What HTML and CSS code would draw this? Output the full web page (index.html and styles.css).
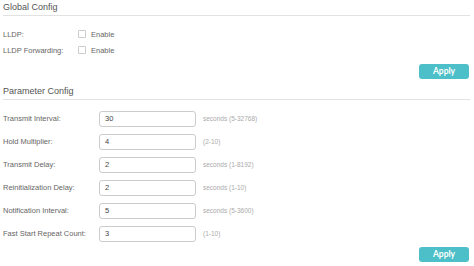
FILE: index.html
```html
<!DOCTYPE html>
<html>
<head>
<meta charset="utf-8">
<link rel="stylesheet" href="styles.css">
</head>
<body>
<div class="page">
  <section class="panel">
    <div class="title">Global Config</div>
    <div class="check-rows">
      <div class="crow"><span class="clabel">LLDP:</span><span class="box"></span><span class="ctext">Enable</span></div>
      <div class="crow"><span class="clabel">LLDP Forwarding:</span><span class="box"></span><span class="ctext">Enable</span></div>
    </div>
    <div class="actions"><button class="apply">Apply</button></div>
  </section>
  <section class="panel">
    <div class="title">Parameter Config</div>
    <div class="form">
      <div class="frow"><span class="flabel">Transmit Interval:</span><span class="input">30</span><span class="hint">seconds (5-32768)</span></div>
      <div class="frow"><span class="flabel">Hold Multiplier:</span><span class="input">4</span><span class="hint">(2-10)</span></div>
      <div class="frow"><span class="flabel">Transmit Delay:</span><span class="input">2</span><span class="hint">seconds (1-8192)</span></div>
      <div class="frow"><span class="flabel">Reinitialization Delay:</span><span class="input">2</span><span class="hint">seconds (1-10)</span></div>
      <div class="frow"><span class="flabel">Notification Interval:</span><span class="input">5</span><span class="hint">seconds (5-3600)</span></div>
      <div class="frow"><span class="flabel">Fast Start Repeat Count:</span><span class="input">3</span><span class="hint">(1-10)</span></div>
    </div>
    <div class="actions second"><button class="apply">Apply</button></div>
  </section>
</div>
</body>
</html>
```
FILE: styles.css
```css
html, body {
  margin: 0;
  padding: 0;
  background: #ffffff;
}
body {
  font-family: "Liberation Sans", Arial, sans-serif;
  color: #666666;
}
.page {
  padding: 0 4px 0 3px;
}
.title {
  height: 15px;
  line-height: 15px;
  font-size: 9px;
  color: #555555;
  border-bottom: 1px solid #e2e2e2;
}
.check-rows {
  margin-top: 10px;
}
.crow {
  display: flex;
  align-items: center;
  height: 16px;
  font-size: 7.5px;
}
.clabel {
  width: 75px;
  flex: none;
}
.box {
  width: 6px;
  height: 6px;
  border: 1px solid #cccccc;
  border-radius: 1px;
  flex: none;
}
.ctext {
  margin-left: 5px;
}
.actions {
  display: flex;
  justify-content: flex-end;
  margin-top: 6px;
  margin-bottom: 5px;
  padding-right: 1px;
}
.second {
  margin-top: 2px;
}
.apply {
  width: 50px;
  height: 15px;
  padding: 0;
  border: none;
  border-radius: 3px;
  background: #4cbfc8;
  color: #ffffff;
  font-family: Lato, "Liberation Sans", sans-serif;
  font-size: 8.5px;
  font-weight: bold;
  line-height: 15px;
}
.form {
  margin-top: 7px;
}
.frow {
  display: flex;
  align-items: center;
  height: 23px;
  font-size: 7.5px;
}
.flabel {
  width: 96px;
  flex: none;
}
.input {
  box-sizing: border-box;
  width: 97px;
  height: 16px;
  line-height: 14px;
  padding-left: 5px;
  border: 1px solid #cccccc;
  border-radius: 3px;
  color: #444444;
  flex: none;
}
.hint {
  margin-left: 7px;
  font-size: 6.5px;
  color: #aaaaaa;
}
```
